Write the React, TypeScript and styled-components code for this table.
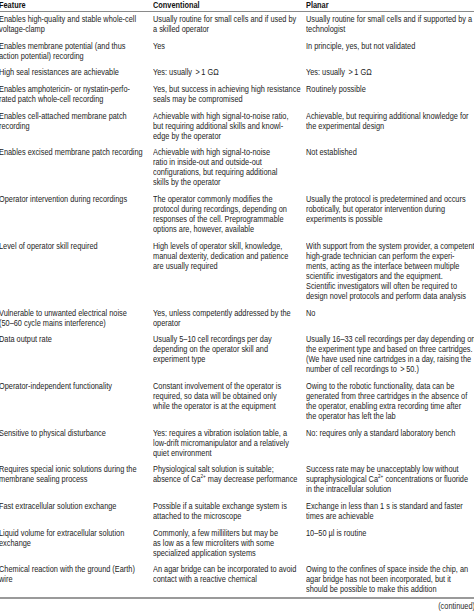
import React from "react";
import styled, { createGlobalStyle } from "styled-components";

const GlobalStyle = createGlobalStyle`
  html, body {
    margin: 0;
    padding: 0;
    background: #ffffff;
  }
  body {
    width: 474px;
    height: 611px;
    overflow: hidden;
  }
`;

const Page = styled.div`
  width: 476px;
  margin-left: -1px;
  font-family: "Liberation Sans", Arial, sans-serif;
  font-size: 9.5px;
  line-height: 10px;
  color: #232323;
`;

const Grid = styled.div`
  display: grid;
  grid-template-columns: 154px 153px 1fr;
`;

const Header = styled(Grid)`
  font-weight: bold;
  color: #111;
  padding-bottom: 1px;
  border-bottom: 1px solid #8a8a8a;
`;

const Body = styled.div`
  display: flex;
  flex-direction: column;
  gap: 6.7px;
  padding-top: 2px;
  padding-bottom: 3px;
  border-bottom: 2px solid #9a9a9a;
`;

/* the reference face is a condensed sans; squeeze Liberation Sans to its width */
const Cell = styled.div`
  white-space: nowrap;
  transform: scaleX(0.775);
  transform-origin: left top;
`;

const Footer = styled.div`
  text-align: right;
  padding-top: 2px;
  color: #2a2a2a;
  white-space: nowrap;
  transform: scaleX(0.775);
  transform-origin: right top;
`;

const Sup = styled.sup`
  font-size: 6px;
  line-height: 0;
`;

type Line = React.ReactNode;
type Row = [Line[], Line[], Line[]];

const Ca = () => (
  <>
    Ca<Sup>2+</Sup>
  </>
);

const rows: Row[] = [
  [
    ["Enables high-quality and stable whole-cell", "voltage-clamp"],
    ["Usually routine for small cells and if used by", "a skilled operator"],
    ["Usually routine for small cells and if supported by a", "technologist"],
  ],
  [
    ["Enables membrane potential (and thus", "action potential) recording"],
    ["Yes"],
    ["In principle, yes, but not validated"],
  ],
  [
    ["High seal resistances are achievable"],
    ["Yes: usually \u2009>\u20091 G\u03a9"],
    ["Yes: usually \u2009>\u20091 G\u03a9"],
  ],
  [
    ["Enables amphotericin- or nystatin-perfo-", "rated patch whole-cell recording"],
    ["Yes, but success in achieving high resistance", "seals may be compromised"],
    ["Routinely possible"],
  ],
  [
    ["Enables cell-attached membrane patch", "recording"],
    [
      "Achievable with high signal-to-noise ratio,",
      "but requiring additional skills and knowl-",
      "edge by the operator",
    ],
    ["Achievable, but requiring additional knowledge for", "the experimental design"],
  ],
  [
    ["Enables excised membrane patch recording"],
    [
      "Achievable with high signal-to-noise",
      "ratio in inside-out and outside-out",
      "configurations, but requiring additional",
      "skills by the operator",
    ],
    ["Not established"],
  ],
  [
    ["Operator intervention during recordings"],
    [
      "The operator commonly modifies the",
      "protocol during recordings, depending on",
      "responses of the cell. Preprogrammable",
      "options are, however, available",
    ],
    [
      "Usually the protocol is predetermined and occurs",
      "robotically, but operator intervention during",
      "experiments is possible",
    ],
  ],
  [
    ["Level of operator skill required"],
    [
      "High levels of operator skill, knowledge,",
      "manual dexterity, dedication and patience",
      "are usually required",
    ],
    [
      "With support from the system provider, a competent",
      "high-grade technician can perform the experi-",
      "ments, acting as the interface between multiple",
      "scientific investigators and the equipment.",
      "Scientific investigators will often be required to",
      "design novel protocols and perform data analysis",
    ],
  ],
  [
    ["Vulnerable to unwanted electrical noise", "(50\u201360 cycle mains interference)"],
    ["Yes, unless competently addressed by the", "operator"],
    ["No"],
  ],
  [
    ["Data output rate"],
    [
      "Usually 5\u201310 cell recordings per day",
      "depending on the operator skill and",
      "experiment type",
    ],
    [
      "Usually 16\u201333 cell recordings per day depending on",
      "the experiment type and based on three cartridges.",
      "(We have used nine cartridges in a day, raising the",
      "number of cell recordings to \u2009>\u200950.)",
    ],
  ],
  [
    ["Operator-independent functionality"],
    [
      "Constant involvement of the operator is",
      "required, so data will be obtained only",
      "while the operator is at the equipment",
    ],
    [
      "Owing to the robotic functionality, data can be",
      "generated from three cartridges in the absence of",
      "the operator, enabling extra recording time after",
      "the operator has left the lab",
    ],
  ],
  [
    ["Sensitive to physical disturbance"],
    [
      "Yes: requires a vibration isolation table, a",
      "low-drift micromanipulator and a relatively",
      "quiet environment",
    ],
    ["No: requires only a standard laboratory bench"],
  ],
  [
    ["Requires special ionic solutions during the", "membrane sealing process"],
    [
      "Physiological salt solution is suitable;",
      <>
        absence of <Ca /> may decrease performance
      </>,
    ],
    [
      "Success rate may be unacceptably low without",
      <>
        supraphysiological <Ca /> concentrations or fluoride
      </>,
      "in the intracellular solution",
    ],
  ],
  [
    ["Fast extracellular solution exchange"],
    ["Possible if a suitable exchange system is", "attached to the microscope"],
    ["Exchange in less than 1 s is standard and faster", "times are achievable"],
  ],
  [
    ["Liquid volume for extracellular solution", "exchange"],
    [
      "Commonly, a few milliliters but may be",
      "as low as a few microliters with some",
      "specialized application systems",
    ],
    ["10\u201350 \u00b5l is routine"],
  ],
  [
    ["Chemical reaction with the ground (Earth)", "wire"],
    ["An agar bridge can be incorporated to avoid", "contact with a reactive chemical"],
    [
      "Owing to the confines of space inside the chip, an",
      "agar bridge has not been incorporated, but it",
      "should be possible to make this addition",
    ],
  ],
];

const CellLines = ({ lines }: { lines: Line[] }) => (
  <Cell>
    {lines.map((l, i) => (
      <div key={i}>{l}</div>
    ))}
  </Cell>
);

export default function App() {
  return (
    <Page>
      <GlobalStyle />
      <Header>
        <Cell>Feature</Cell>
        <Cell>Conventional</Cell>
        <Cell>Planar</Cell>
      </Header>
      <Body>
        {rows.map((r, i) => (
          <Grid key={i}>
            <CellLines lines={r[0]} />
            <CellLines lines={r[1]} />
            <CellLines lines={r[2]} />
          </Grid>
        ))}
      </Body>
      <Footer>(continued)</Footer>
    </Page>
  );
}
